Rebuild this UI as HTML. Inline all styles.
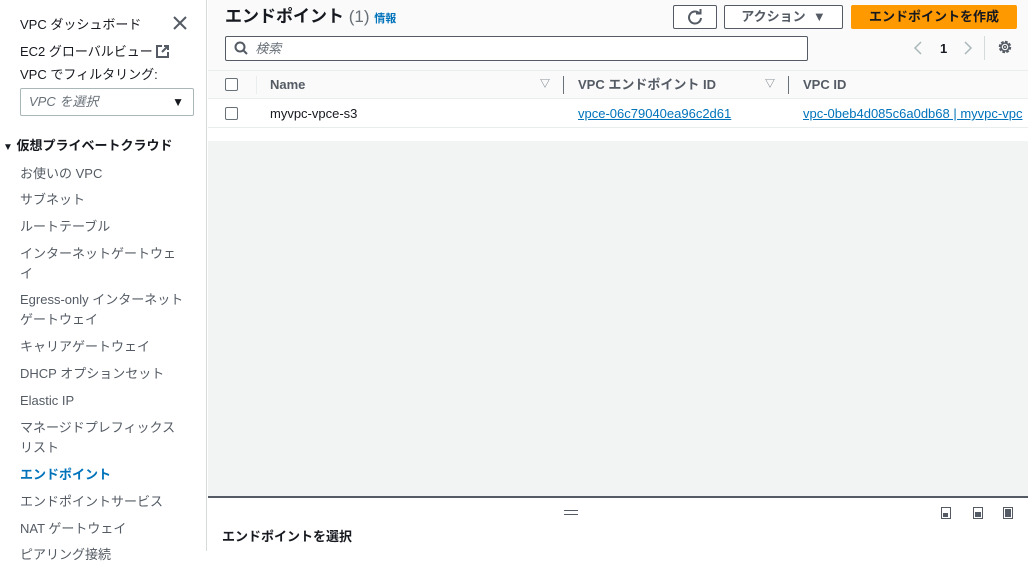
<!DOCTYPE html>
<html><head><meta charset="utf-8"><style>
*{margin:0;padding:0;box-sizing:border-box}
body{width:1028px;height:551px;overflow:hidden;position:relative;background:#fff;font-family:"Liberation Sans","Noto Sans CJK JP",sans-serif;font-size:13px;color:#16191f}
.a{position:absolute;white-space:nowrap;line-height:16px}
#side .a{line-height:20px}
#side .t{margin-top:2px}
.s{color:#545b64;font-size:13px;left:20px;margin-top:2px}
#side{position:absolute;left:0;top:0;width:207px;height:551px;background:#fff;border-right:1px solid #d5dbdb}
#main{position:absolute;left:208px;top:0;width:820px;height:551px;background:#f2f3f3}
.btn{position:absolute;border:1px solid #545b64;background:#fff;border-radius:2px;font-weight:bold;color:#545b64;font-size:13px;text-align:center}
a{color:#0073bb;text-decoration:underline}
.cb{position:absolute;width:13px;height:13px;border:1.5px solid #687078;border-radius:2px;background:#fff}
</style></head><body>
<div id="side">
<div class="a t" style="left:20px;top:13px;color:#16191f">VPC ダッシュボード</div>
<div class="a" style="left:173px;top:16px"><svg width="14" height="14"><path d="M1 1L13 13M13 1L1 13" stroke="#545b64" stroke-width="2"/></svg></div>
<div class="a t" style="left:20px;top:40px">EC2 グローバルビュー <svg width="13" height="13" style="vertical-align:-2px"><path d="M6 1H1V12H12V7M8 1H12V5M12 1L6 7" stroke="#545b64" stroke-width="2" fill="none"/></svg></div>
<div class="a t" style="left:20px;top:63px">VPC でフィルタリング:</div>
<div class="a" style="left:20px;top:88px;width:174px;height:28px;border:1px solid #aab7b8;border-radius:2px;font-style:italic;color:#687078;padding:3px 8px">VPC を選択<span style="position:absolute;right:9px;top:3px;font-style:normal;color:#16191f;font-size:12px">▼</span></div>
<div class="a t" style="left:3px;top:134px;font-weight:bold;color:#16191f"><span style="font-size:10px">▼</span> 仮想プライベートクラウド</div>
<div class="a s" style="top:162px">お使いの VPC</div>
<div class="a s" style="top:188px">サブネット</div>
<div class="a s" style="top:215px">ルートテーブル</div>
<div class="a s" style="top:242px">インターネットゲートウェ<br>イ</div>
<div class="a s" style="top:288px">Egress-only インターネット<br>ゲートウェイ</div>
<div class="a s" style="top:335px">キャリアゲートウェイ</div>
<div class="a s" style="top:362px">DHCP オプションセット</div>
<div class="a s" style="top:389px">Elastic IP</div>
<div class="a s" style="top:416px">マネージドプレフィックス<br>リスト</div>
<div class="a s" style="top:463px;color:#0073bb;font-weight:bold">エンドポイント</div>
<div class="a s" style="top:490px">エンドポイントサービス</div>
<div class="a s" style="top:517px">NAT ゲートウェイ</div>
<div class="a s" style="top:543px">ピアリング接続</div>
</div>
<div id="main">
<div class="a" style="left:0;top:0;width:820px;height:70px;background:#fafafa"></div>
<div class="a" style="left:17px;top:7px;font-size:17px;line-height:20px;font-weight:bold">エンドポイント <span style="color:#687078;font-weight:normal">(1)</span> <span style="color:#0073bb;font-size:11px">情報</span></div>
<div class="btn" style="left:465px;top:5px;width:44px;height:24px"><svg width="16" height="16" style="margin-top:3px"><path d="M12.5 4.5A6 6 0 1 0 14 9" stroke="#545b64" stroke-width="2" fill="none"/><path d="M9 4.5H13.5V0" stroke="#545b64" stroke-width="2" fill="none"/></svg></div>
<div class="btn" style="left:516px;top:5px;width:119px;height:24px;line-height:22px">アクション &nbsp;▼</div>
<div class="btn" style="left:643px;top:5px;width:166px;height:24px;line-height:22px;background:#ff9900;border-color:#ff9900;color:#16191f">エンドポイントを作成</div>
<div class="a" style="left:17px;top:36px;width:583px;height:25px;border:1px solid #545b64;border-radius:2px;background:#fff;padding:4px 8px;font-style:italic;color:#687078"><svg width="14" height="14" style="vertical-align:-2px"><circle cx="6" cy="6" r="4.5" stroke="#545b64" stroke-width="2" fill="none"/><path d="M9.5 9.5L13 13" stroke="#545b64" stroke-width="2"/></svg>&nbsp; 検索</div>
<svg class="a" style="left:705px;top:41px" width="10" height="14"><path d="M8 1L2 7L8 13" stroke="#aab7b8" stroke-width="1.5" fill="none"/></svg>
<div class="a" style="left:732px;top:41px;font-weight:bold">1</div>
<svg class="a" style="left:755px;top:41px" width="10" height="14"><path d="M2 1L8 7L2 13" stroke="#aab7b8" stroke-width="1.5" fill="none"/></svg>
<div class="a" style="left:776px;top:36px;width:1px;height:24px;background:#d5dbdb"></div>
<svg class="a" style="left:789px;top:39px" width="16" height="16"><circle cx="8" cy="8" r="5" stroke="#545b64" stroke-width="2.5" fill="none" stroke-dasharray="2.6 1.3"/><circle cx="8" cy="8" r="4" stroke="#545b64" stroke-width="1.5" fill="none"/><circle cx="8" cy="8" r="1.5" stroke="#545b64" stroke-width="1.2" fill="none"/></svg>
<div class="a" style="left:0;top:70px;width:820px;height:29px;background:#fafafa;border-top:1px solid #eaeded;border-bottom:1px solid #eaeded"></div>
<div class="a" style="left:0;top:99px;width:820px;height:29px;background:#fff;border-bottom:1px solid #eaeded"></div>
<div class="cb" style="left:17px;top:78px"></div>
<div class="a" style="left:48px;top:76px;width:1px;height:18px;background:#eaeded"></div>
<div class="a" style="left:62px;top:77px;font-weight:bold;color:#545b64">Name</div>
<div class="a" style="left:332px;top:77px;font-size:10px;color:#687078">▽</div>
<div class="a" style="left:355px;top:76px;width:1px;height:18px;background:#687078"></div>
<div class="a" style="left:370px;top:77px;font-weight:bold;color:#545b64">VPC エンドポイント ID</div>
<div class="a" style="left:557px;top:77px;font-size:10px;color:#687078">▽</div>
<div class="a" style="left:580px;top:76px;width:1px;height:18px;background:#687078"></div>
<div class="a" style="left:595px;top:77px;font-weight:bold;color:#545b64">VPC ID</div>
<div class="cb" style="left:17px;top:107px"></div>
<div class="a" style="left:62px;top:106px">myvpc-vpce-s3</div>
<div class="a" style="left:370px;top:106px"><a>vpce-06c79040ea96c2d61</a></div>
<div class="a" style="left:595px;top:106px"><a>vpc-0beb4d085c6a0db68 | myvpc-vpc</a></div>
<div class="a" style="left:0;top:128px;width:820px;height:13px;background:#fff"></div>
<div class="a" style="left:0;top:496px;width:820px;height:55px;background:#fff;border-top:2px solid #545b64"></div>
<div class="a" style="left:356px;top:510px;width:14px;height:5px;border-top:1px solid #545b64;border-bottom:1px solid #545b64"></div>
<div class="a" style="left:733px;top:507px;width:10px;height:12px;border:1.5px solid #545b64"><div style="position:absolute;left:1px;bottom:1px;width:5px;height:4px;background:#545b64"></div></div>
<div class="a" style="left:765px;top:507px;width:10px;height:12px;border:1.5px solid #545b64"><div style="position:absolute;left:1px;right:1px;bottom:1px;height:5px;background:#545b64"></div></div>
<div class="a" style="left:795px;top:507px;width:10px;height:12px;border:1.5px solid #545b64"><div style="position:absolute;left:1px;right:1px;bottom:1px;top:1px;background:#545b64"></div></div>
<div class="a" style="left:14px;top:529px;font-weight:bold;font-size:13px">エンドポイントを選択</div>
</div>
</body></html>
